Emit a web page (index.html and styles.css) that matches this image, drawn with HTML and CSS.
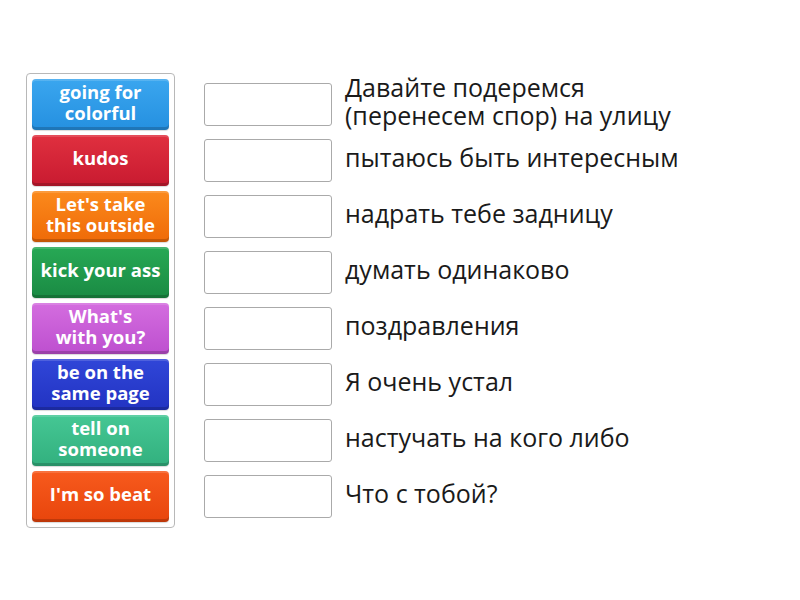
FILE: index.html
```html
<!DOCTYPE html>
<html>
<head>
<meta charset="utf-8">
<link rel="stylesheet" href="styles.css">
</head>
<body>
<div class="page">
  <div class="bank">
    <div class="tile blue">going for<br>colorful</div>
    <div class="tile red">kudos</div>
    <div class="tile orange">Let's take<br>this outside</div>
    <div class="tile green">kick your ass</div>
    <div class="tile purple">What's<br>with you?</div>
    <div class="tile navy">be on the<br>same page</div>
    <div class="tile teal">tell on<br>someone</div>
    <div class="tile vermilion">I'm so beat</div>
  </div>
  <div class="answers">
    <div class="row"><div class="slot"></div><div class="label">Давайте подеремся (перенесем спор) на улицу</div></div>
    <div class="row"><div class="slot"></div><div class="label">пытаюсь быть интересным</div></div>
    <div class="row"><div class="slot"></div><div class="label">надрать тебе задницу</div></div>
    <div class="row"><div class="slot"></div><div class="label">думать одинаково</div></div>
    <div class="row"><div class="slot"></div><div class="label">поздравления</div></div>
    <div class="row"><div class="slot"></div><div class="label">Я очень устал</div></div>
    <div class="row"><div class="slot"></div><div class="label">настучать на кого либо</div></div>
    <div class="row"><div class="slot"></div><div class="label">Что с тобой?</div></div>
  </div>
</div>
</body>
</html>
```
FILE: styles.css
```css
html, body {
  margin: 0;
  padding: 0;
  background: #ffffff;
  font-family: "Open Sans", "Noto Sans", sans-serif;
}
.page {
  display: flex;
  align-items: flex-start;
  padding: 73px 0 0 26px;
  gap: 29px;
}
.bank {
  display: flex;
  flex-direction: column;
  gap: 5px;
  padding: 5px;
  border: 1px solid #b8b8b8;
  border-radius: 4px;
}
.tile {
  box-sizing: border-box;
  width: 137px;
  height: 51px;
  border-radius: 4px;
  display: flex;
  align-items: center;
  justify-content: center;
  text-align: center;
  color: #ffffff;
  font-weight: 700;
  font-size: 18.5px;
  line-height: 21px;
  padding: 0 2px 6px;
  box-shadow: inset 0 -3px 0 rgba(0,0,0,0.18), inset 0 2px 0 rgba(255,255,255,0.15), 0 1px 1px rgba(0,0,0,0.15);
}
.blue { background: linear-gradient(#3aa6ef, #2590e0); }
.red { background: linear-gradient(#e0303f, #c81a30); }
.orange { background: linear-gradient(#fb8a1c, #ef6a08); }
.green { background: linear-gradient(#27a955, #1a8a43); }
.purple { background: linear-gradient(#d46ddf, #bd4fcf); }
.navy { background: linear-gradient(#3046d8, #2233c2); }
.teal { background: linear-gradient(#45c794, #32b07e); }
.vermilion { background: linear-gradient(#f75a1d, #e8450c); }
.answers {
  display: flex;
  flex-direction: column;
  padding-top: 6px;
  gap: 5px;
}
.row {
  height: 51px;
  display: flex;
  align-items: center;
  gap: 13px;
}
.slot {
  box-sizing: border-box;
  width: 128px;
  height: 43px;
  border: 1px solid #aaaaaa;
  border-radius: 3px;
  background: #ffffff;
  flex: none;
}
.label {
  width: 345px;
  font-size: 25px;
  line-height: 28px;
  padding-bottom: 8px;
  color: #1a1a1a;
}
```
